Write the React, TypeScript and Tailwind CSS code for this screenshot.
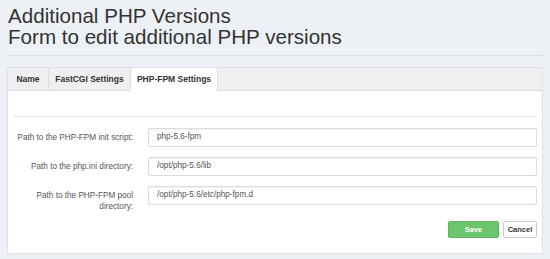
const font = "font-['Liberation_Sans',Arial,sans-serif]";

export default function App() {
    return (
        <div className={`min-h-[259px] w-[550px] bg-[#edf1f5] ${font} text-[#333]`}>
            <div className="px-[8px] pt-[5px]">
                <div className="text-[20.6px] leading-[21px]">Additional PHP Versions</div>
                <div className="text-[20.6px] leading-[21px]">Form to edit additional PHP versions</div>
                <div className="mt-[8px] h-px bg-[#d9dfe5] mr-[-1px]"></div>
            </div>
            <Panel></Panel>
        </div>
    )
}

const Panel = function () {
    return (
        <div className="mx-[7px] mt-[11px] w-[536px] h-[187px] border border-[#dbe1e6] bg-white">
            <div className="flex h-[23px] bg-[#efefef] text-[8.5px] font-bold text-[#333]">
                <div className="w-[41px] flex items-center justify-center border-r border-b border-[#dddddd]">Name</div>
                <div className="w-[82px] flex items-center justify-center border-r border-b border-[#dddddd]">FastCGI Settings</div>
                <div className="w-[87px] flex items-center justify-center bg-white border-r border-[#dddddd]">PHP-FPM Settings</div>
                <div className="flex-1 border-b border-[#dddddd]"></div>
            </div>
            <div className="px-[5px]">
                <div className="mt-[25px] h-px bg-[#e3e3e3]"></div>
                <div className="mt-[11px] flex flex-col gap-[10px]">
                    <Row label={["Path to the PHP-FPM init script:"]} value="php-5.6-fpm"></Row>
                    <Row label={["Path to the php.ini directory:"]} value="/opt/php-5.6/lib"></Row>
                    <Row label={["Path to the PHP-FPM pool", "directory:"]} value="/opt/php-5.6/etc/php-fpm.d"></Row>
                </div>
                <div className="mt-[16px] flex justify-end gap-[4px]">
                    <button className="w-[51px] h-[17px] rounded-[2px] bg-[#6cc46c] border border-[#5fb75f] text-white text-[7.5px] font-bold">Save</button>
                    <button className="w-[34px] h-[17px] rounded-[2px] bg-white border border-[#cccccc] text-[#333] text-[7.5px] font-bold">Cancel</button>
                </div>
            </div>
        </div>
    )
}

const Row = function ({ label, value }: { label: string[]; value: string }) {
    return (
        <div className="flex gap-[15px] h-[19px]">
            <div className={`w-[120px] text-right text-[8.2px] leading-[11px] text-[#555] ${label.length > 1 ? 'pt-[4px]' : 'flex flex-col justify-center'}`}>
                {label.map((l) => (
                    <div key={l}>{l}</div>
                ))}
            </div>
            <div className="flex-1 h-[19px] border border-[#dcdcdc] rounded-[2px] shadow-[inset_0_1px_1px_rgba(0,0,0,0.05)] flex items-center px-[8px] text-[8.2px] text-[#555]">
                {value}
            </div>
        </div>
    )
}
